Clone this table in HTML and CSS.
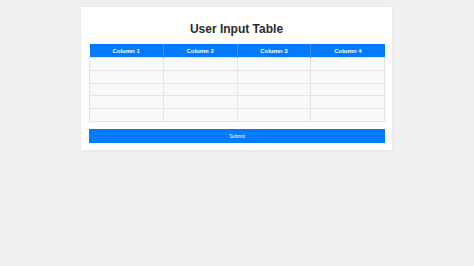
FILE: index.html
```html
<!DOCTYPE html>
<html>
<head>
<meta charset="utf-8">
<link rel="stylesheet" href="styles.css">
</head>
<body>
<div class="card">
  <h1 class="title">User Input Table</h1>
  <table class="grid">
    <thead>
      <tr><th>Column 1</th><th>Column 2</th><th>Column 3</th><th>Column 4</th></tr>
    </thead>
    <tbody>
      <tr><td></td><td></td><td></td><td></td></tr>
      <tr><td></td><td></td><td></td><td></td></tr>
      <tr><td></td><td></td><td></td><td></td></tr>
      <tr><td></td><td></td><td></td><td></td></tr>
      <tr><td></td><td></td><td></td><td></td></tr>
    </tbody>
  </table>
  <button class="submit">Submit</button>
</div>
</body>
</html>
```
FILE: styles.css
```css
html, body {
  margin: 0;
  padding: 0;
}
body {
  background: #f0f0f0;
  font-family: "Liberation Sans", Arial, sans-serif;
  width: 474px;
  height: 266px;
  padding-top: 7px;
  box-sizing: border-box;
}
.card {
  width: 311px;
  margin: 0 auto;
  background: #fff;
  box-sizing: border-box;
  padding: 7px 8px 7px 8px;
  box-shadow: 0 0 3px rgba(0,0,0,0.08);
  position: relative;
  left: -0.5px;
}
.title {
  margin: 0 0 7px 0;
  padding-top: 8px;
  font-size: 12px;
  line-height: 15px;
  text-align: center;
  color: #2b2b2b;
  font-weight: bold;
}
.grid {
  width: 296px;
  border-collapse: collapse;
  table-layout: fixed;
}
.grid th {
  background: #007bff;
  color: #fff;
  font-size: 6px;
  font-weight: bold;
  height: 13px;
  padding: 0;
  border: 1px solid #3d96f5;
  border-top: none;
  border-bottom: none;
}
.grid th:first-child { border-left: none; }
.grid th:last-child { border-right: none; }
.grid td {
  height: 11.8px;
  padding: 0;
  border: 1px solid #e4e4e4;
  background: #f9f9f9;
}
.submit {
  display: block;
  width: 296px;
  height: 14px;
  margin-top: 7px;
  border: none;
  background: #007bff;
  color: #fff;
  font-family: "Liberation Sans", Arial, sans-serif;
  font-size: 5px;
  padding: 0;
}
```
